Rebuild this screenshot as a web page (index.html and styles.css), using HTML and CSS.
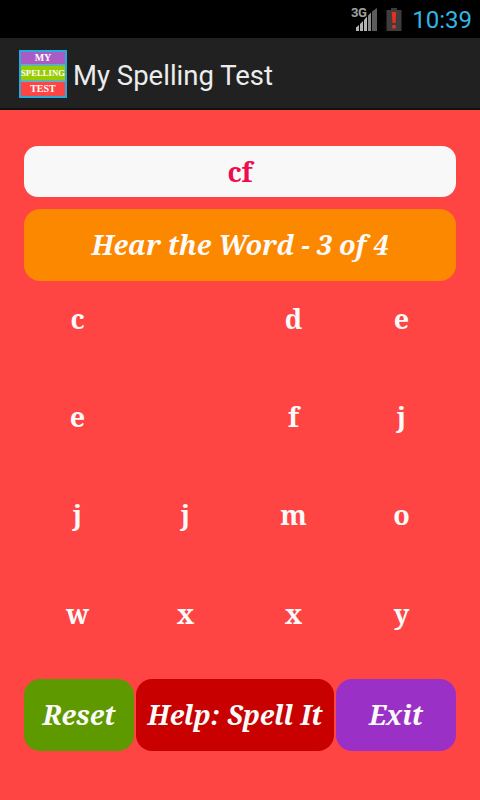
FILE: index.html
```html
<!DOCTYPE html>
<html lang="en">
<head>
<meta charset="utf-8">
<title>My Spelling Test</title>
<link rel="stylesheet" href="styles.css">
</head>
<body>
<div class="app">
  <header class="status">
    <span class="net">3G</span>
    <svg class="signal" width="21" height="23" viewBox="0 0 21 23">
      <path d="M0 23v-3.500L3 17v6zM4 23v-7l3-3v10zM8 23V12l3-3.500V23z" fill="#b4b4b4"/>
      <path d="M12 23V7.500L15 4.500V23z" fill="#8a8a8a"/>
      <path d="M16 23V3.500L21 0v23z" fill="#5c5c5c"/>
    </svg>
    <svg class="battery" width="16" height="23" viewBox="0 0 16 23">
      <path d="M5 0h6v2h4.500v21H.5V2H5z" fill="#3d3d3d"/>
      <path d="M5.800 4h4.400l-.7 11H6.500zM6.300 17h3.400v3.500H6.300z" fill="#e5301f"/>
    </svg>
    <span class="clock">10:39</span>
  </header>
  <nav class="actionbar">
    <div class="logo">
      <span class="logo-my">MY</span>
      <span class="logo-spelling">SPELLING</span>
      <span class="logo-test">TEST</span>
    </div>
    <h1 class="title">My Spelling Test</h1>
  </nav>
  <main class="content">
    <div class="answer">cf</div>
    <button class="hear">Hear the Word - 3 of 4</button>
    <div class="letters">
      <span class="letter">c</span><span class="letter"></span><span class="letter">d</span><span class="letter">e</span>
      <span class="letter">e</span><span class="letter"></span><span class="letter">f</span><span class="letter">j</span>
      <span class="letter">j</span><span class="letter">j</span><span class="letter">m</span><span class="letter">o</span>
      <span class="letter">w</span><span class="letter">x</span><span class="letter">x</span><span class="letter">y</span>
    </div>
    <div class="actions">
      <button class="action reset">Reset</button>
      <button class="action help">Help: Spell It</button>
      <button class="action exit">Exit</button>
    </div>
  </main>
</div>
</body>
</html>
```
FILE: styles.css
```css
* { box-sizing: border-box; }
html, body { margin: 0; padding: 0; }
body { width: 480px; height: 800px; overflow: hidden; background: #ff4444; }
.app { width: 480px; height: 800px; display: flex; flex-direction: column; }

.status {
  height: 38px; background: #000; display: flex; align-items: center;
  justify-content: flex-end; padding-right: 8px; position: relative;
}
.net {
  position: absolute; left: 351px; top: 6px;
  font: bold 13px/14px "Roboto", sans-serif; color: #a0a0a0; letter-spacing: -0.5px;
}
.signal { margin-right: 9px; }
.battery { margin-right: 10px; }
.clock { font: 400 24px/30px "Roboto", sans-serif; color: #33b5e5; margin-top: 1px; }

.actionbar {
  height: 72px; background: #212121; border-bottom: 2px solid #111; padding-top: 2px;
  display: flex; align-items: center; padding-left: 19px; gap: 6px;
}
.logo {
  width: 48px; height: 48px; border: 2px solid #2aa9dd; background: #5fb0b8;
  display: flex; flex-direction: column; gap: 2px;
  font-family: "Liberation Serif", serif; font-weight: bold; font-size: 10px;
  color: #fff; text-align: center;
}
.logo span { display: block; }
.logo-my { background: #aa5cc5; height: 12px; line-height: 12px; }
.logo-spelling { background: #99cc00; height: 14px; line-height: 14px; font-size: 8.700px; white-space: nowrap; }
.logo-test { background: #ff4444; height: 14px; line-height: 13px; }
.title { margin: 4px 0 0; font: 400 27.500px/32px "Roboto", sans-serif; color: #ececec; }

.content { flex: 1; padding: 36px 24px 0; display: flex; flex-direction: column; }
.answer {
  height: 51px; background: #f8f8f8; border-radius: 14px; text-align: center;
  font: bold 27px/51px "Noto Serif", "Droid Serif", "DejaVu Serif", serif; color: #f00a50;
}
.hear {
  height: 72px; margin-top: 12px; border: 0; background: #fc8800; border-radius: 16px; color: #fafafa;
  font: italic bold 27px/72px "Noto Serif", "Droid Serif", "DejaVu Serif", serif; padding: 0;
}
.letters {
  display: grid; grid-template-columns: repeat(4, 108px);
  grid-template-rows: 74px 74px 74px 76px; row-gap: 24px;
}
.letter {
  display: flex; align-items: center; justify-content: center; padding-right: 1px;
  font: bold 27px/1 "Noto Serif", "Droid Serif", "DejaVu Serif", serif; color: #fafafa;
}
.actions { display: flex; margin-top: 28px; gap: 2px; }
.action {
  height: 72px; border: 0; padding: 0; border-radius: 16px; color: #fafafa;
  font: italic bold 27px/72px "Noto Serif", "Droid Serif", "DejaVu Serif", serif;
}
.reset { width: 110px; background: #5f9900; }
.help { width: 198px; background: #c80000; }
.exit { width: 120px; background: #9b30c6; }
```
